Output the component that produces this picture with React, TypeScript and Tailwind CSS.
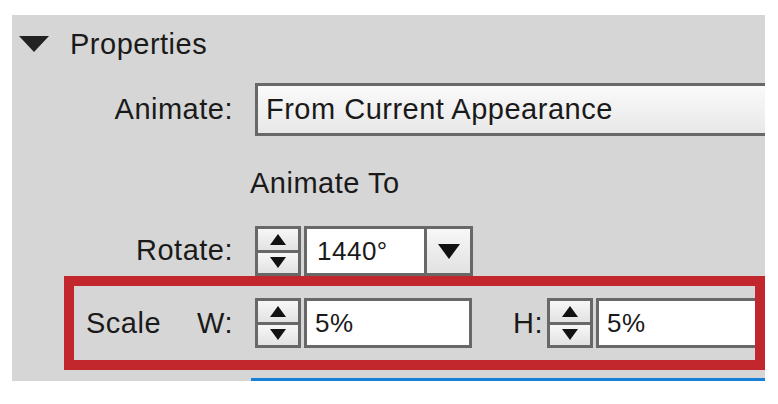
import React from "react";

const font = { fontFamily: '"Liberation Sans", Arial, sans-serif' };

function Stepper() {
  return (
    <div className="flex h-[50px] w-[46px] shrink-0 flex-col border-[3px] border-[#686868] bg-[#686868]">
      <div className="flex flex-1 items-center justify-center bg-gradient-to-b from-[#f7f7f7] to-[#e2e2e2]">
        <svg width="16" height="11" viewBox="0 0 16 11">
          <polygon points="8,0 16,11 0,11" fill="#111" />
        </svg>
      </div>
      <div className="h-[3px]" />
      <div className="flex flex-1 items-center justify-center bg-gradient-to-b from-[#f7f7f7] to-[#e2e2e2]">
        <svg width="16" height="11" viewBox="0 0 16 11">
          <polygon points="0,0 16,0 8,11" fill="#111" />
        </svg>
      </div>
    </div>
  );
}

function TextBox({ value, w }: { value: string; w: string }) {
  return (
    <div className={`flex h-[50px] ${w} shrink-0 items-center border-[3px] border-[#686868] bg-white pl-[8px] text-[26px] leading-none text-[#1a1a1a]`}>
      {value}
    </div>
  );
}

export default function App() {
  return (
    <div className="h-[404px] w-[778px] bg-white pt-[15px] pl-[12px]" style={font}>
      <div className="flex h-[366px] w-[753px] flex-col overflow-hidden bg-[#d6d6d6] text-[29px] leading-[29px] tracking-[0.5px] text-[#1a1a1a]">
        <div className="flex h-[58px] shrink-0 items-center">
          <svg className="ml-[7px] shrink-0" width="30" height="16" viewBox="0 0 30 16">
            <polygon points="0,0 30,0 15,16" fill="#222" />
          </svg>
          <span className="ml-[21px]">Properties</span>
        </div>

        <div className="mt-[10px] flex h-[53px] shrink-0 items-center">
          <span className="w-[221px] shrink-0 text-right">Animate:</span>
          <div className="ml-[22px] flex h-full flex-1 items-center border-y-[3px] border-l-[3px] border-[#686868] bg-gradient-to-b from-[#fafafa] to-[#e8e8e8] pl-[8px]">
            From Current Appearance
          </div>
        </div>

        <div className="mt-[33px] h-[29px] shrink-0 pl-[238px]">Animate To</div>

        <div className="mt-[28px] flex h-[48px] shrink-0 items-center">
          <span className="w-[221px] shrink-0 text-right">Rotate:</span>
          <div className="ml-[22px] flex h-[48px] shrink-0 items-stretch">
            <Stepper />
            <div className="ml-[3px] flex h-[50px] w-[169px] shrink-0 border-[3px] border-[#686868] bg-[#686868]">
              <div className="flex flex-1 items-center bg-white pl-[10px] text-[26px] leading-none">1440°</div>
              <div className="ml-[3px] flex w-[43px] items-center justify-center bg-gradient-to-b from-[#f7f7f7] to-[#e2e2e2]">
                <svg width="22" height="15" viewBox="0 0 22 15">
                  <polygon points="0,0 22,0 11,15" fill="#111" />
                </svg>
              </div>
            </div>
          </div>
        </div>

        <div className="mt-[2px] ml-[52px] flex h-[94px] shrink-0 items-center overflow-hidden border-[10px] border-[#c1272d]">
          <div className="flex w-[159px] shrink-0 justify-between pl-[12px]">
            <span>Scale</span>
            <span>W:</span>
          </div>
          <div className="ml-[22px] flex shrink-0 items-center">
            <Stepper />
            <div className="ml-[3px]">
              <TextBox value="5%" w="w-[168px]" />
            </div>
          </div>
          <span className="ml-[41px] shrink-0">H:</span>
          <div className="ml-[4px] flex shrink-0 items-center">
            <Stepper />
            <div className="ml-[3px]">
              <TextBox value="5%" w="w-[180px]" />
            </div>
          </div>
        </div>

        <div className="mt-[8px] ml-[239px] h-[3px] shrink-0 bg-[#1681d6]" />
      </div>
    </div>
  );
}
